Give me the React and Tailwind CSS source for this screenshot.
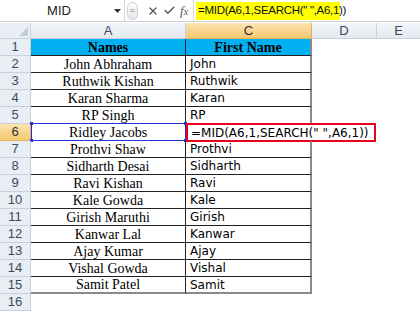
import { X, Check } from 'lucide-react';

const ROWS = [
  ['John Abhraham', 'John'],
  ['Ruthwik Kishan', 'Ruthwik'],
  ['Karan Sharma', 'Karan'],
  ['RP Singh', 'RP'],
  ['Ridley Jacobs', null],
  ['Prothvi Shaw', 'Prothvi'],
  ['Sidharth Desai', 'Sidharth'],
  ['Ravi Kishan', 'Ravi'],
  ['Kale Gowda', 'Kale'],
  ['Girish Maruthi', 'Girish'],
  ['Kanwar Lal', 'Kanwar'],
  ['Ajay Kumar', 'Ajay'],
  ['Vishal Gowda', 'Vishal'],
  ['Samit Patel', 'Samit'],
];

function RowHead({ n, active }) {
  return (
    <div
      className={`w-[31px] shrink-0 h-full flex items-center justify-center text-[13px] border-r border-b ${
        active
          ? 'bg-gradient-to-b from-[#fbe3b0] to-[#f4c86e] border-[#e0b35a] text-[#333]'
          : 'bg-[#e9eef5] border-[#c8d0da] text-[#3c4a5c]'
      }`}
      style={{ fontFamily: '"Liberation Sans", sans-serif' }}
    >
      {n}
    </div>
  );
}

export default function App() {
  return (
    <div className="w-[420px] h-[311px] overflow-hidden bg-white relative select-none">
      {/* formula bar */}
      <div className="flex h-[22px] items-center bg-white border-b border-[#c9ced6]">
        <div className="w-[125px] h-full flex items-center border-r border-[#d5d9df] relative">
          <span className="w-[118px] text-center text-[13px] text-[#222]" style={{ fontFamily: '"Liberation Sans", sans-serif' }}>MID</span>
          <svg className="absolute left-[114px] top-[9px]" width="7" height="4" viewBox="0 0 7 4">
            <path d="M0 0h7L3.5 4z" fill="#333" />
          </svg>
        </div>
        <div className="w-[11px] h-[18px] ml-[2px] rounded-full border border-[#c8ccd2] bg-gradient-to-b from-[#fdfdfd] to-[#e5e7ea] flex flex-col items-center justify-center gap-[1px]">
          <div className="w-[5px] h-[1px] bg-[#b0b4ba]" />
          <div className="w-[5px] h-[1px] bg-[#b0b4ba]" />
        </div>
        <X className="ml-[9px] text-[#555]" size={12} strokeWidth={2.6} />
        <Check className="ml-[4px] text-[#555]" size={13} strokeWidth={2.6} />
        <span className="ml-[4px] text-[13px] italic text-[#555]" style={{ fontFamily: '"Liberation Serif", serif' }}>
          f<span className="text-[10px]">x</span>
        </span>
        <div className="h-full flex items-center ml-[5px] border-l border-[#d5d9df] pl-[2px]">
          <div className="h-[18px] bg-[#ffff00] flex items-center pl-[2px] pr-[1px] w-[144px]">
            <span className="text-[11.5px] tracking-[-0.3px] text-[#111] whitespace-pre" style={{ fontFamily: '"Liberation Sans", sans-serif' }}>
              =MID(A6,1,SEARCH(" ",A6,1))
            </span>
            <div className="w-[1px] h-[14px] bg-black ml-[2px]" />
          </div>
        </div>
      </div>

      {/* column header */}
      <div className="flex h-[16px] mt-[1px]" style={{ fontFamily: '"Liberation Sans", sans-serif' }}>
        <div className="w-[31px] shrink-0 h-full bg-[#e9eef5] border-r border-b border-[#c8d0da] relative">
          <svg className="absolute right-[2px] bottom-[2px]" width="9" height="9" viewBox="0 0 9 9">
            <path d="M9 0v9H0z" fill="#c7ccd4" />
          </svg>
        </div>
        <div className="w-[155px] shrink-0 h-full bg-gradient-to-b from-[#f3f6fa] to-[#e4e9f0] border-r border-b border-[#c8d0da] flex items-center justify-center text-[13px] text-[#3c4a5c]">A</div>
        <div className="w-[126px] shrink-0 h-full bg-gradient-to-b from-[#fbe3b0] to-[#f4c86e] border-r border-b border-[#e0b35a] flex items-center justify-center text-[13px] text-[#333]">C</div>
        <div className="w-[65px] shrink-0 h-full bg-gradient-to-b from-[#f3f6fa] to-[#e4e9f0] border-r border-b border-[#c8d0da] flex items-center justify-center text-[13px] text-[#3c4a5c]">D</div>
        <div className="flex-1 h-full bg-gradient-to-b from-[#f3f6fa] to-[#e4e9f0] border-b border-[#c8d0da] flex items-center justify-center text-[13px] text-[#3c4a5c]">E</div>
      </div>

      {/* row 1 */}
      <div className="flex h-[17px]">
        <RowHead n={1} />
        <div className="w-[155px] shrink-0 h-full bg-[#00b0f0] border-r border-b border-[#222] flex items-center justify-center text-[14px] font-bold text-black" style={{ fontFamily: '"Liberation Serif", serif' }}>Names</div>
        <div className="w-[126px] shrink-0 h-full bg-[#00b0f0] border-r-2 border-b border-r-[#8a8a8a] border-b-[#222] flex items-center justify-center text-[14px] font-bold text-black" style={{ fontFamily: '"Liberation Serif", serif' }}>First Name</div>
      </div>

      {ROWS.map(([name, first], i) => {
        const n = i + 2;
        const active = n === 6;
        const last = n === 15;
        return (
          <div key={n} className="flex h-[17px] relative">
            <RowHead n={n} active={active} />
            <div
              className={`w-[155px] shrink-0 h-full border-r border-[#222] flex items-center justify-center text-[14px] text-black ${
                last ? 'border-b-2 border-b-[#8a8a8a]' : 'border-b border-b-[#222]'
              }`}
              style={{ fontFamily: '"Liberation Serif", serif' }}
            >
              {name}
            </div>
            <div
              className={`w-[126px] shrink-0 h-full border-r-2 border-r-[#8a8a8a] flex items-center pl-[4px] text-[12px] text-black ${
                last ? 'border-b-2 border-b-[#8a8a8a]' : 'border-b border-b-[#222]'
              }`}
              style={{ fontFamily: '"DejaVu Sans", sans-serif' }}
            >
              {first}
            </div>
            {active && (
              <>
                <div className="absolute left-[31px] top-[-1px] w-[155px] h-[18px] border border-[#2b2bd8] pointer-events-none" />
                <div className="absolute left-[30px] top-[-2px] w-[3px] h-[3px] bg-[#2b2bd8]" />
                <div className="absolute left-[184px] top-[-2px] w-[3px] h-[3px] bg-[#2b2bd8]" />
                <div className="absolute left-[30px] top-[15px] w-[3px] h-[3px] bg-[#2b2bd8]" />
                <div className="absolute left-[184px] top-[15px] w-[3px] h-[3px] bg-[#2b2bd8]" />
                <div className="absolute left-[186px] top-[-1px] w-[190px] h-[19px] border-2 border-[#e8001c] bg-white flex items-center pl-[3px]">
                  <span className="text-[12px] text-black whitespace-pre" style={{ fontFamily: '"DejaVu Sans", sans-serif' }}>
                    =MID(A6,1,SEARCH(" ",A6,1))
                  </span>
                </div>
              </>
            )}
          </div>
        );
      })}

      {/* row 16 */}
      <div className="flex h-[17px]">
        <RowHead n={16} />
      </div>
    </div>
  );
}
